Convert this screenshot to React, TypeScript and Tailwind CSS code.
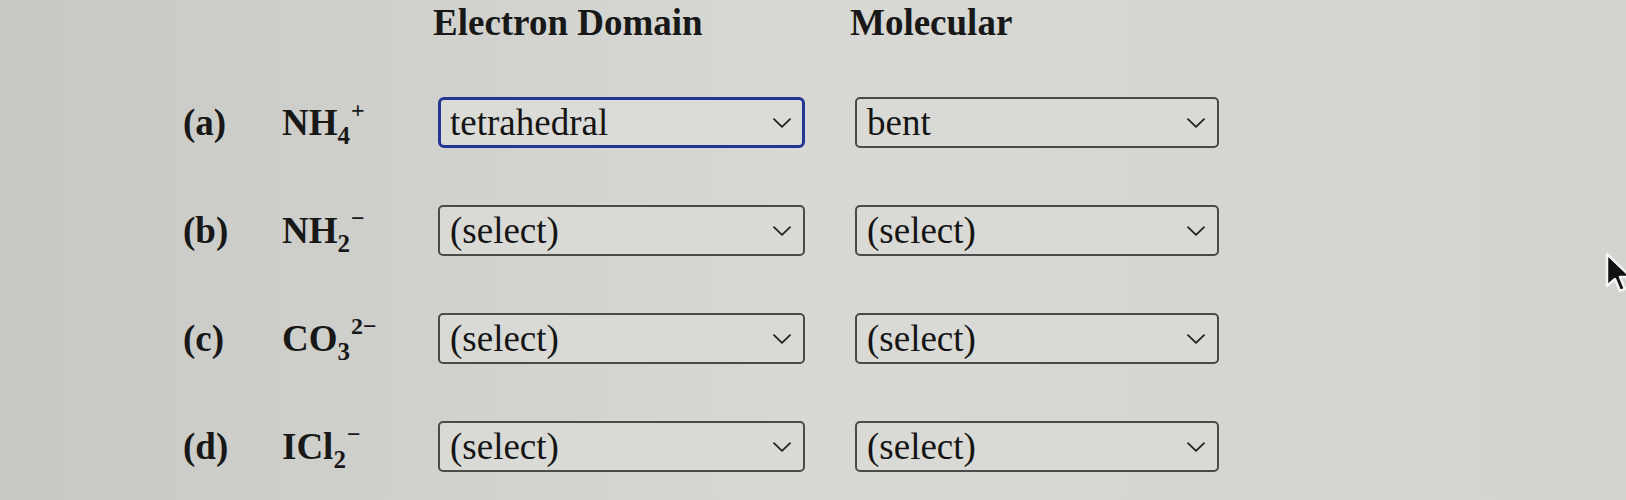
import React from 'react';

type Row = {
  tag: string;
  base: string;
  sub: string;
  sup: string;
  domain: string;
  molecular: string;
  active?: boolean;
};

const rows: Row[] = [
  { tag: '(a)', base: 'NH', sub: '4', sup: '+', domain: 'tetrahedral', molecular: 'bent', active: true },
  { tag: '(b)', base: 'NH', sub: '2', sup: '−', domain: '(select)', molecular: '(select)' },
  { tag: '(c)', base: 'CO', sub: '3', sup: '2−', domain: '(select)', molecular: '(select)' },
  { tag: '(d)', base: 'ICl', sub: '2', sup: '−', domain: '(select)', molecular: '(select)' },
];

function Chevron() {
  return (
    <svg width="18" height="10" viewBox="0 0 18 10" fill="none" className="shrink-0">
      <path d="M1 1.2L9 8.8L17 1.2" stroke="#222" strokeWidth="1.8" strokeLinecap="round" strokeLinejoin="round" />
    </svg>
  );
}

function Dropdown({ value, active }: { value: string; active?: boolean }) {
  return (
    <div
      className={
        active
          ? 'flex h-[51px] items-center justify-between rounded-[6px] border-[3px] border-[#243592] bg-[#dbdcd7] pl-[9px] pr-[11px]'
          : 'flex h-[51px] items-center justify-between rounded-[5px] border-2 border-[#4a4a4a] bg-[#d9dad5] pl-[10px] pr-[12px]'
      }
    >
      <span className="leading-none text-[37px] text-[#141414]">{value}</span>
      <Chevron />
    </div>
  );
}

export default function App() {
  return (
    <div className="relative h-[500px] w-[1626px] overflow-hidden bg-gradient-to-r from-[#c8c9c4] via-[#d8d9d4] to-[#d3d4cf] font-['Liberation_Serif',serif] text-[#181818]">
      <div className="flex flex-col pl-[183px] pt-[4px]">
        {/* Headers */}
        <div className="flex font-bold leading-none text-[37px]">
          <div className="w-[250px]" />
          <div className="w-[417px]">Electron Domain</div>
          <div>Molecular</div>
        </div>

        {/* Rows */}
        <div className="mt-[56px] flex flex-col gap-[57px]">
          {rows.map((r) => (
            <div key={r.tag} className="flex items-center">
              <div className="w-[99px] font-bold leading-none text-[37px]">{r.tag}</div>
              <div className="w-[156px] font-bold leading-none text-[37px]">
                {r.base}
                <span className="relative top-[9px] text-[25px]">{r.sub}</span>
                <span className="relative top-[-17px] ml-[1px] text-[24px]">{r.sup}</span>
              </div>
              <div className="w-[367px]">
                <Dropdown value={r.domain} active={r.active} />
              </div>
              <div className="ml-[50px] w-[364px]">
                <Dropdown value={r.molecular} />
              </div>
            </div>
          ))}
        </div>
      </div>

      {/* mouse pointer at the right edge */}
      <svg className="absolute left-[1604px] top-[252px]" width="30" height="44" viewBox="0 0 30 44">
        <path d="M3 2 L3 34 L11 27 L16 39 L21 37 L16 25 L27 25 Z" fill="#111" stroke="#f4f4f4" strokeWidth="2.5" strokeLinejoin="round" />
      </svg>
    </div>
  );
}
